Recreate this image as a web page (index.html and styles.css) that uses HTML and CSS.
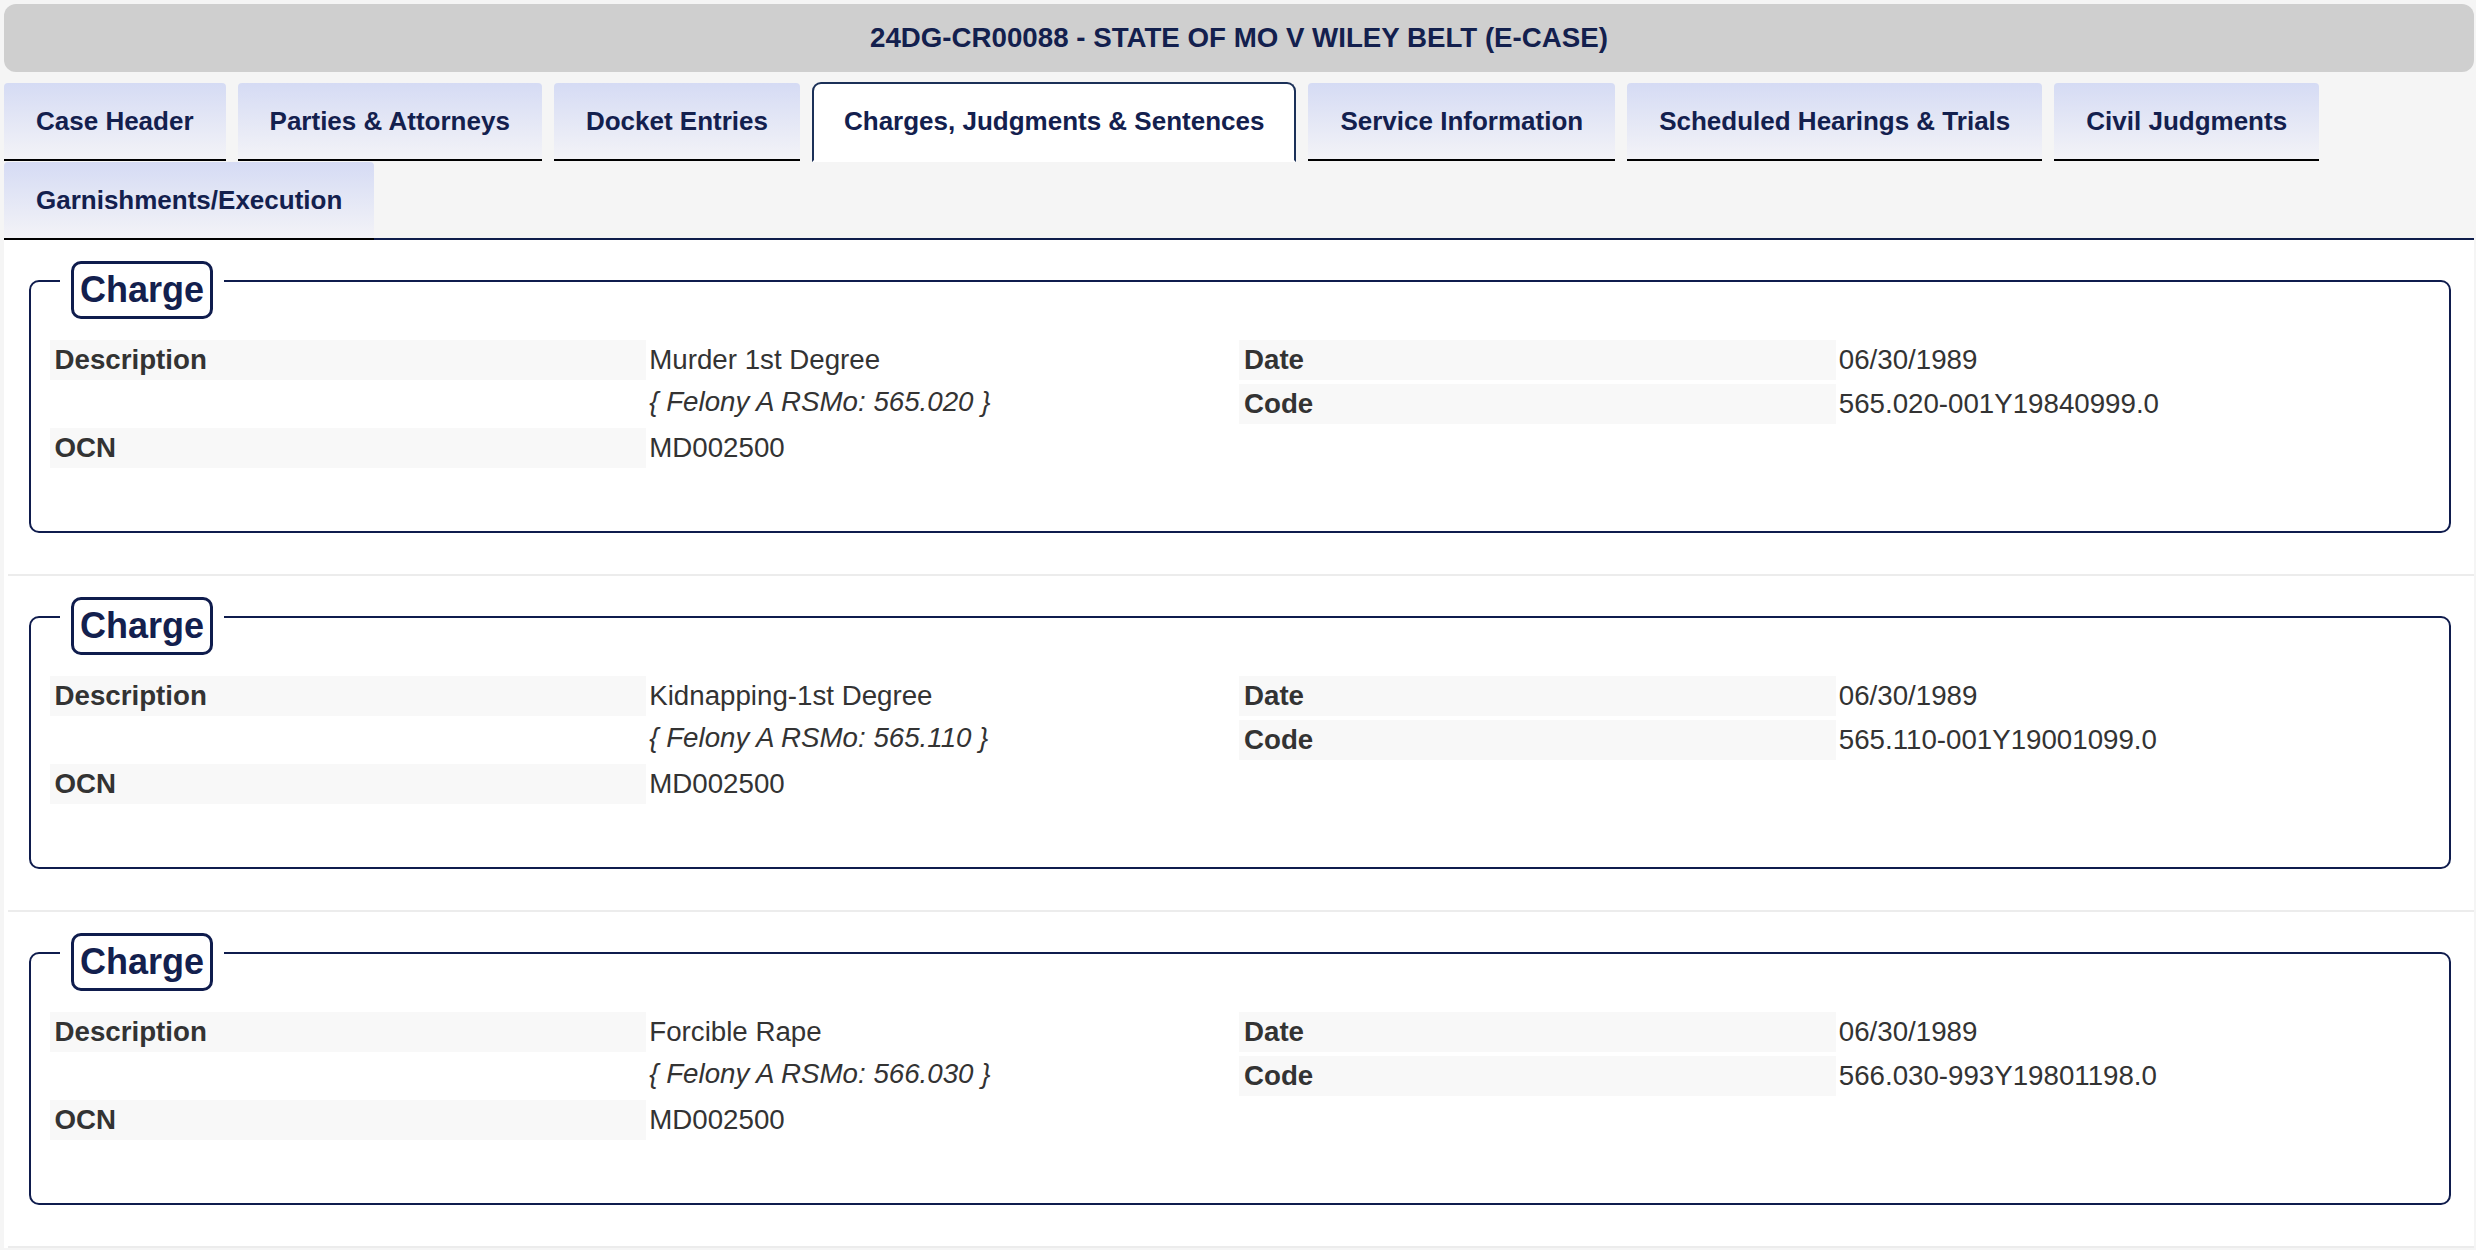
FILE: index.html
```html
<!DOCTYPE html>
<html lang="en">
<head>
<meta charset="utf-8">
<title>24DG-CR00088 - STATE OF MO V WILEY BELT (E-CASE)</title>
<link rel="stylesheet" href="styles.css">
</head>
<body>
<div class="case-title">24DG-CR00088 - STATE OF MO V WILEY BELT (E-CASE)</div>
<nav class="tabs">
  <a class="tab">Case Header</a>
  <a class="tab">Parties &amp; Attorneys</a>
  <a class="tab">Docket Entries</a>
  <a class="tab active">Charges, Judgments &amp; Sentences</a>
  <a class="tab">Service Information</a>
  <a class="tab">Scheduled Hearings &amp; Trials</a>
  <a class="tab">Civil Judgments</a>
  <a class="tab">Garnishments/Execution</a>
</nav>
<main class="content">
  <section class="charge-section">
    <fieldset class="charge">
      <legend class="charge-legend"><span class="legend-box">Charge</span></legend>
      <div class="charge-grid">
        <div class="label">Description</div>
        <div class="value">Murder 1st Degree</div>
        <div class="label">Date</div>
        <div class="value">06/30/1989</div>
        <div class="blank"></div>
        <div class="value statute">{ Felony A RSMo: 565.020 }</div>
        <div class="label">Code</div>
        <div class="value">565.020-001Y19840999.0</div>
        <div class="label">OCN</div>
        <div class="value">MD002500</div>
      </div>
    </fieldset>
  </section>
  <section class="charge-section">
    <fieldset class="charge">
      <legend class="charge-legend"><span class="legend-box">Charge</span></legend>
      <div class="charge-grid">
        <div class="label">Description</div>
        <div class="value">Kidnapping-1st Degree</div>
        <div class="label">Date</div>
        <div class="value">06/30/1989</div>
        <div class="blank"></div>
        <div class="value statute">{ Felony A RSMo: 565.110 }</div>
        <div class="label">Code</div>
        <div class="value">565.110-001Y19001099.0</div>
        <div class="label">OCN</div>
        <div class="value">MD002500</div>
      </div>
    </fieldset>
  </section>
  <section class="charge-section">
    <fieldset class="charge">
      <legend class="charge-legend"><span class="legend-box">Charge</span></legend>
      <div class="charge-grid">
        <div class="label">Description</div>
        <div class="value">Forcible Rape</div>
        <div class="label">Date</div>
        <div class="value">06/30/1989</div>
        <div class="blank"></div>
        <div class="value statute">{ Felony A RSMo: 566.030 }</div>
        <div class="label">Code</div>
        <div class="value">566.030-993Y19801198.0</div>
        <div class="label">OCN</div>
        <div class="value">MD002500</div>
      </div>
    </fieldset>
  </section>
</main>
</body>
</html>
```

FILE: styles.css
```css
html, body {
  margin: 0;
}
body {
  background: #f5f5f5;
  padding: 4px 2px 0 4px;
  font-family: "Liberation Sans", Arial, Helvetica, sans-serif;
  color: #333333;
}

.case-title {
  height: 68px;
  line-height: 68px;
  background: #cfcfcf;
  border-radius: 12px;
  text-align: center;
  font-size: 27.7px;
  font-weight: bold;
  color: #13204e;
}

.tabs {
  display: flex;
  flex-wrap: wrap;
  column-gap: 12px;
  row-gap: 3px;
  margin-top: 11px;
  border-bottom: 2px solid #0f1d4b;
}
.tab {
  display: block;
  box-sizing: border-box;
  height: 78px;
  padding: 23px 32px 0;
  line-height: 30px;
  margin-bottom: -2px;
  font-size: 26px;
  font-weight: bold;
  color: #13204e;
  background: linear-gradient(#d5dbf4, #f3f3f7);
  border-bottom: 2px solid #000000;
  border-radius: 4px 4px 0 0;
  white-space: nowrap;
}
.tab.active {
  background: #ffffff;
  border: 2px solid #1b3058;
  border-bottom: 2px solid #ffffff;
  border-radius: 9px 9px 0 0;
  padding: 22px 30px 0;
  height: 80px;
  margin-top: -1px;
  margin-bottom: -3px;
}

.content {
  background: #ffffff;
  padding: 0 0 0 4px;
}
.charge-section {
  padding: 21px 23px 41px 21px;
  border-bottom: 2px solid #ececec;
}
.charge {
  margin: 0;
  padding: 39px 19px 63px;
  border: 2px solid #0f1c4d;
  border-radius: 10px;
  min-width: 0;
}
.charge-legend {
  padding: 0 11px;
  margin-left: 10px;
}
.legend-box {
  display: block;
  margin-bottom: -18px;
  padding: 0 6px;
  height: 52px;
  line-height: 52px;
  border: 3px solid #0f1c4d;
  border-radius: 10px;
  font-size: 36px;
  font-weight: bold;
  color: #13204e;
  background: #ffffff;
}

.charge-grid {
  display: grid;
  grid-template-columns: 595fr 586fr 595fr 590fr;
  grid-auto-rows: 40px;
  column-gap: 3px;
  row-gap: 4px;
  font-size: 27.7px;
  line-height: 40px;
}
.label {
  background: #f8f8f8;
  font-weight: bold;
  padding-left: 4.5px;
  white-space: nowrap;
}
.value {
  white-space: nowrap;
}
.statute {
  font-style: italic;
  line-height: 36px;
}
```
